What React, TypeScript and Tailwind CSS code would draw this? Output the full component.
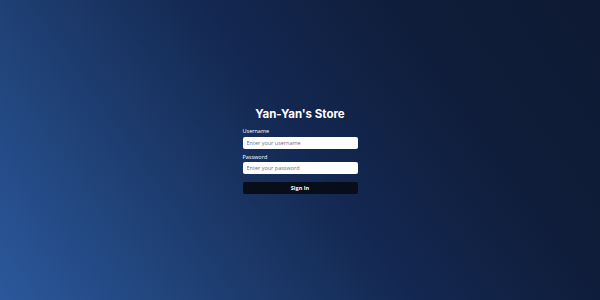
export default function App() {
  return (
    <div className="w-[600px] h-[300px] bg-[linear-gradient(55deg,#2b589c_0%,#1d3c6e_30%,#132750_52%,#0f1d3a_75%,#0e1a33_100%)] flex items-center justify-center font-['Open_Sans',sans-serif]">
      <div className="w-[115px] flex flex-col mt-[1px]">
        <h1 className="text-center text-white font-bold text-[11.5px] leading-[14px] font-['Inter',sans-serif] mb-[7px]">
          Yan-Yan's Store
        </h1>
        <label className="text-white text-[5.5px] leading-[7px] mb-[1.5px]">Username</label>
        <input
          type="text"
          placeholder="Enter your username"
          className="h-[12px] w-full bg-white rounded-[2px] px-[4px] text-[5.5px] placeholder:text-gray-500 outline-none"
        />
        <label className="text-white text-[5.5px] leading-[7px] mt-[5px] mb-[1.5px]">Password</label>
        <input
          type="password"
          placeholder="Enter your password"
          className="h-[12px] w-full bg-white rounded-[2px] px-[4px] text-[5.5px] placeholder:text-gray-500 outline-none"
        />
        <button className="mt-[8px] h-[12px] w-full bg-[#080d1a] rounded-[2px] text-white text-[5.5px] font-bold">
          Sign In
        </button>
      </div>
    </div>
  );
}
